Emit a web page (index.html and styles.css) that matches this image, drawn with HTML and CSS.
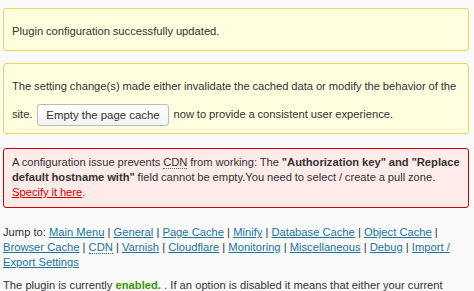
FILE: index.html
```html
<!DOCTYPE html>
<html lang="en">
<head>
  <meta charset="UTF-8" />
  <title>Performance - General Settings</title>
  <link rel="stylesheet" href="styles.css">
</head>
<body>
  <div class="wrap">
    <div class="notice updated">
      <p>Plugin configuration successfully updated.</p>
    </div>

    <div class="notice updated">
      <p>The setting change(s) made either invalidate the cached data or modify the behavior of the site. <input type="button" class="button" value="Empty the page cache"> now to provide a consistent user experience.</p>
    </div>

    <div class="notice error">
      <p>A configuration issue prevents <acronym title="Content Delivery Network">CDN</acronym> from working: The <strong>"Authorization key" and "Replace default hostname with"</strong> field cannot be empty.You need to select / create a pull zone. <a href="#">Specify it here</a>.</p>
    </div>

    <p class="jump">
      Jump to: <a href="#">Main Menu</a> | <a href="#">General</a> | <a href="#">Page Cache</a> | <a href="#">Minify</a> | <a href="#">Database Cache</a> | <a href="#">Object Cache</a> | <a href="#">Browser Cache</a> | <a href="#" class="abbr">CDN</a> | <a href="#">Varnish</a> | <a href="#">Cloudflare</a> | <a href="#">Monitoring</a> | <a href="#">Miscellaneous</a> | <a href="#">Debug</a> | <a href="#">Import / Export Settings</a>
    </p>

    <p class="status">
      The plugin is currently <span class="enabled">enabled.</span> . If an option is disabled it means that either your current installation is not compatible or software installation is required.
    </p>
  </div>
</body>
</html>
```

FILE: styles.css
```css
body {
  margin: 0;
  padding: 8px 5px 0 3px;
  background: #fafafa;
  color: #333;
  font-family: "Liberation Sans", Arial, sans-serif;
  font-size: 11.2px;
}

.notice {
  border: 1px solid;
  border-radius: 3px;
  padding: 0 2px 0 8px;
}

.notice p {
  margin: 0;
  word-spacing: -0.3px;
}

.updated {
  background-color: #ffffe0;
  border-color: #e6db55;
  margin-bottom: 12px;
}

.updated p {
  padding: 8px 0 5px;
  line-height: 28px;
}

.error {
  background-color: #ffebe8;
  border-color: #c00;
  margin-top: 14px;
}

.error p {
  padding: 6px 0 7px;
  line-height: 15px;
}

.error a {
  color: #c00;
}

acronym {
  border-bottom: 1px dotted #666;
  text-decoration: none;
}

.button {
  font-family: inherit;
  font-size: 11.4px;
  word-spacing: 0;
  color: #333;
  height: 22px;
  padding: 0 8px;
  margin: 0 2px;
  border: 1px solid #bbb;
  border-radius: 3px;
  background: linear-gradient(to bottom, #fefefe, #f2f2f2);
  vertical-align: middle;
  cursor: pointer;
}

.jump {
  margin: 17px 0 0;
  line-height: 15px;
}

.jump a {
  color: #21759b;
}

.jump a.abbr {
  text-decoration: none;
  border-bottom: 1px dotted #21759b;
}

.status {
  margin: 8px 0 0;
  line-height: 15px;
}

.enabled {
  color: #390;
  font-weight: bold;
}
```
